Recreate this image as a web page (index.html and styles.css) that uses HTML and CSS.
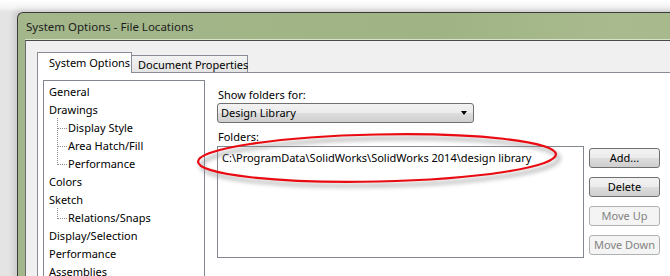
FILE: index.html
```html
<!DOCTYPE html>
<html>
<head>
<meta charset="utf-8">
<link rel="stylesheet" href="styles.css">
</head>
<body>
<div class="screen">
  <div class="window">
    <div class="titlebar">System Options - File Locations</div>
    <div class="client">
      <div class="tabs">
        <div class="tab active">System Options</div>
        <div class="tab">Document Properties</div>
      </div>
      <div class="panel">
        <ul class="tree">
          <li>General</li>
          <li>Drawings</li>
          <li class="child">Display Style</li>
          <li class="child">Area Hatch/Fill</li>
          <li class="child last">Performance</li>
          <li>Colors</li>
          <li>Sketch</li>
          <li class="child last">Relations/Snaps</li>
          <li>Display/Selection</li>
          <li>Performance</li>
          <li>Assemblies</li>
        </ul>
        <div class="content">
          <div class="label">Show folders for:</div>
          <div class="select"><span>Design Library</span><i class="arrow"></i></div>
          <div class="label folders-label">Folders:</div>
          <div class="folders-row">
            <div class="folders">
              <div class="folder-item">C:\ProgramData\SolidWorks\SolidWorks 2014\design library</div>
            </div>
            <div class="buttons">
              <div class="btn">Add...</div>
              <div class="btn">Delete</div>
              <div class="btn disabled">Move Up</div>
              <div class="btn disabled">Move Down</div>
            </div>
          </div>
        </div>
      </div>
    </div>
  </div>
  <svg class="annot" width="670" height="276" viewBox="0 0 670 276">
    <defs>
      <filter id="sh" x="-10%" y="-50%" width="120%" height="200%">
        <feGaussianBlur stdDeviation="2"/>
      </filter>
    </defs>
    <g transform="rotate(-1.2 377 158)">
      <ellipse cx="380" cy="162" rx="179" ry="23.5" fill="none" stroke="#8a8a8a" stroke-opacity="0.7" stroke-width="3" filter="url(#sh)"/>
      <ellipse cx="377" cy="158" rx="179" ry="23.5" fill="none" stroke="#ea0a12" stroke-width="2.2"/>
    </g>
  </svg>
</div>
</body>
</html>
```
FILE: styles.css
```css
* { box-sizing: border-box; }
html, body { margin: 0; padding: 0; }
body {
  width: 670px;
  height: 276px;
  overflow: hidden;
  font-family: "Noto Sans", "Open Sans", sans-serif;
  font-size: 11px;
  color: #000;
}
.screen {
  position: relative;
  width: 670px;
  height: 276px;
  overflow: hidden;
  padding: 12px 0 0 17px;
  background: linear-gradient(to bottom, #ffffff 0px, #f4f4f4 8px, #e4e4e4 12px);
}
.window {
  width: 700px;
  height: 320px;
  border-top: 1px solid #3b3b3b;
  border-left: 1px solid #3b3b3b;
  border-top-left-radius: 6px;
  background: linear-gradient(to right, #a4b78b 0%, #9fb384 60%, #a9bb8e 85%, #a6b98c 100%);
  box-shadow: -3px -2px 6px rgba(0,0,0,0.12);
}
.titlebar {
  height: 27px;
  line-height: 28px;
  padding-left: 8px;
  font-size: 11.5px;
  color: #1c1c1c;
  white-space: nowrap;
}
.client {
  margin-left: 7px;
  height: 300px;
  background: #f0f0f0;
  border-top: 1px solid #4a4a4a;
  border-left: 1px solid #6a6a6a;
  box-shadow: 0 -1px 0 #d7e2c9;
  padding: 11px 0 0 11px;
}
.tabs {
  display: flex;
  align-items: flex-end;
  height: 20px;
  position: relative;
  z-index: 1;
}
.tab {
  height: 17px;
  border: 1px solid #898c95;
  border-left: none;
  border-bottom: none;
  background: linear-gradient(to bottom, #f3f3f3, #e4e4e4);
  line-height: 17px;
  white-space: nowrap;
}
.tab.active {
  width: 95px;
  height: 21px;
  margin-bottom: -1px;
  border-left: 1px solid #898c95;
  background: #fff;
  padding-left: 11px;
  line-height: 19px;
}
.tab:not(.active) { width: 116px; padding-left: 6px; }
.panel {
  background: #fff;
  border-top: 1px solid #898c95;
  border-left: 1px solid #898c95;
  height: 260px;
  display: flex;
  align-items: flex-start;
  padding: 7px 0 0 5px;
}
.tree {
  list-style: none;
  margin: 0;
  padding: 2px 0 0 5px;
  width: 162px;
  height: 230px;
  border: 1px solid #828790;
  flex: none;
}
.tree li {
  height: 18px;
  line-height: 18px;
  white-space: nowrap;
  position: relative;
}
.tree li.child { padding-left: 19px; }
.tree li.child::before {
  content: "";
  position: absolute;
  left: 8px;
  top: -1px;
  width: 9px;
  height: 10px;
  border-left: 1px dotted #8a8a8a;
  border-bottom: 1px dotted #8a8a8a;
}
.tree li.child:not(.last)::after {
  content: "";
  position: absolute;
  left: 8px;
  top: 9px;
  height: 9px;
  border-left: 1px dotted #8a8a8a;
}
.content {
  margin-left: 12px;
  padding-top: 6px;
  width: 450px;
}
.label {
  height: 16px;
  line-height: 17px;
  padding-left: 1px;
}
.select {
  margin-top: 1px;
  width: 257px;
  height: 20px;
  border: 1px solid #707070;
  border-radius: 3px;
  background: linear-gradient(to bottom, #f2f2f2 0%, #ebebeb 50%, #dddddd 51%, #cfcfcf 100%);
  display: flex;
  align-items: center;
  justify-content: space-between;
  padding: 0 6px 0 3px;
  line-height: 18px;
}
.arrow {
  width: 0;
  height: 0;
  border-left: 3.5px solid transparent;
  border-right: 3.5px solid transparent;
  border-top: 4px solid #000;
}
.folders-label { margin-top: 5px; }
.folders-row {
  display: flex;
  gap: 5px;
  margin-top: 2px;
  align-items: flex-start;
}
.folders {
  width: 367px;
  height: 112px;
  border: 1px solid #828790;
  padding: 1px 0 0 4px;
}
.folder-item { line-height: 19px; white-space: nowrap; }
.buttons {
  display: flex;
  flex-direction: column;
  gap: 9px;
  padding-top: 2px;
}
.btn {
  width: 71px;
  height: 20px;
  border: 1px solid #707070;
  border-radius: 3px;
  background: linear-gradient(to bottom, #f2f2f2 0%, #ebebeb 50%, #dddddd 51%, #cfcfcf 100%);
  text-align: center;
  line-height: 18px;
  white-space: nowrap;
}
.btn.disabled {
  border-color: #adb2b5;
  background: #f4f4f4;
  color: #838383;
}
.annot {
  position: absolute;
  left: 0;
  top: 0;
  pointer-events: none;
}
```
